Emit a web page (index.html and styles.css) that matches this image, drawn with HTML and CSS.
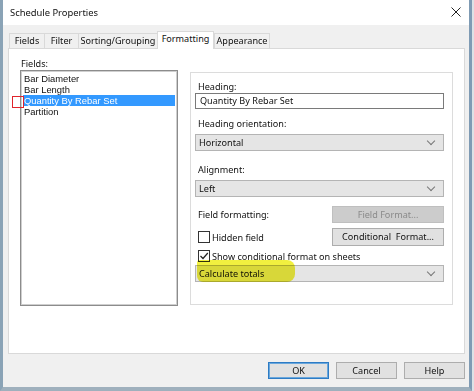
FILE: index.html
```html
<!DOCTYPE html>
<html>
<head>
<title>Schedule Properties</title>
<link rel="stylesheet" href="styles.css">
</head>
<body>
<div class="window">
	<div class="titlebar">
		<span class="title">Schedule Properties</span>
		<svg class="close" width="10" height="10" viewBox="0 0 10 10"><path d="M0.5 0.5 L9.5 9.5 M9.5 0.5 L0.5 9.5" stroke="#222" stroke-width="1"/></svg>
	</div>
	<div class="frame">
		<div class="tabs">
			<div class="tab tab-fields">Fields</div>
			<div class="tab tab-filter">Filter</div>
			<div class="tab tab-sorting">Sorting/Grouping</div>
			<div class="tab tab-formatting selected">Formatting</div>
			<div class="tab tab-appearance">Appearance</div>
		</div>
		<div class="page">
			<div class="fields-col">
				<div class="label">Fields:</div>
				<div class="listbox">
					<div class="item">Bar Diameter</div>
					<div class="item">Bar Length</div>
					<div class="item active">Quantity By Rebar Set</div>
					<div class="item">Partition</div>
				</div>
			</div>
			<div class="group">
				<div class="label">Heading:</div>
				<div class="textbox">Quantity By Rebar Set</div>
				<div class="label gap-big">Heading orientation:</div>
				<div class="combo">Horizontal <span class="chev"></span></div>
				<div class="label gap-align">Alignment:</div>
				<div class="combo">Left <span class="chev"></span></div>
				<div class="row row-format">
					<span class="label">Field formatting:</span>
					<div class="button disabled">Field Format...</div>
				</div>
				<div class="row row-hidden">
					<span class="check"><span class="box"></span>Hidden field</span>
					<div class="button cond">Conditional&nbsp; Format...</div>
				</div>
				<div class="row row-show">
					<span class="check"><span class="box"><svg width="10" height="10" viewBox="0 0 10 10"><path d="M1.5 5 L4 7.5 L8.8 2" fill="none" stroke="#222" stroke-width="1.2"/></svg></span>Show conditional format on sheets</span>
				</div>
				<div class="combo totals">Calculate totals <span class="chev"></span></div>
			</div>
			<div class="marker-red"></div>
			<div class="marker-yellow"></div>
		</div>
		<div class="buttons">
			<div class="button focused">OK</div>
			<div class="button">Cancel</div>
			<div class="button">Help</div>
		</div>
	</div>
</div>
</body>
</html>
```

FILE: styles.css
```css
html, body { margin: 0; padding: 0; background: #dde2e6; }
body { font-family: "Noto Sans", "DejaVu Sans", sans-serif; font-size: 9.1px; color: #111; }
.window { width: 472px; height: 391px; box-sizing: border-box; border-left: 3px solid #8aa3b6; border-right: 3px solid #7f9bb4; border-bottom: 4px solid #9fb0bd; display: flex; flex-direction: column; background: #f0f0f0; }
.titlebar { height: 25px; flex: none; background: #fff; display: flex; align-items: center; padding-left: 7px; padding-right: 8px; }
.title { font-size: 9.4px; flex: 1; padding-bottom: 1px; }
.close { margin-top: -2px; }
.frame { flex: 1; display: flex; flex-direction: column; padding: 0 4px 0 5px; }
.tabs { height: 23px; display: flex; align-items: flex-end; padding-left: 1px; }
.tab { height: 15px; line-height: 14px; box-sizing: border-box; border: 1px solid #d9d9d9; border-bottom: none; border-right: none; text-align: center; background: #f0f0f0; white-space: nowrap; }
.tab-fields { width: 35px; }
.tab-filter { width: 34px; }
.tab-sorting { width: 79px; }
.tab-appearance { width: 56px; border-right: 1px solid #d9d9d9; }
.tab.selected { width: 57px; height: 18px; line-height: 14px; background: #fff; border: 1px solid #d9d9d9; border-bottom: none; margin-bottom: -1px; position: relative; z-index: 1; }
.page { height: 306px; box-sizing: border-box; background: #fff; border: 1px solid #d9d9d9; display: flex; padding: 8px 0 0 11px; position: relative; }
.label { line-height: 13px; height: 13px; white-space: nowrap; }
.fields-col { width: 158px; display: flex; flex-direction: column; }
.fields-col .label { margin-left: 1px; }
.listbox { height: 236px; box-sizing: border-box; border: 1px solid #8c8c8c; box-shadow: inset 0 0 0 1px #cfcfcf; padding: 2px 2px 0 2px; }
.item { height: 11px; line-height: 11px; padding-left: 1px; white-space: nowrap; font-family: "Liberation Sans", Arial, sans-serif; font-size: 9.4px; }
.item.active { background: #3399ff; color: #fff; }
.group { width: 263px; height: 233px; margin: 15px 0 0 12px; box-sizing: border-box; border: 1px solid #dcdcdc; padding: 7px 0 0 4px; display: flex; flex-direction: column; }
.group > .label { margin-left: 3px; }
.textbox { width: 249px; height: 16px; box-sizing: border-box; border: 1px solid #7a7a7a; line-height: 14px; padding-left: 4px; }
.gap-big { margin-top: 8px; }
.gap-align { margin-top: 12px; }
.combo { width: 249px; height: 17px; box-sizing: border-box; border: 1px solid #b4b4b4; background: #e5e5e5; line-height: 15px; padding-left: 3px; display: flex; align-items: center; justify-content: space-between; margin-top: 4px; }
.chev { width: 5px; height: 5px; border-right: 1px solid #777; border-bottom: 1px solid #777; transform: rotate(45deg); margin: -4px 9px 0 0; }
.row { display: flex; align-items: center; justify-content: space-between; width: 249px; }
.row .label { margin-left: 3px; }
.row-format { margin-top: 9px; height: 17px; }
.row-hidden { margin-top: 5px; height: 18px; }
.row-show { margin-top: 4px; height: 12px; }
.totals { margin-top: 3px; }
.check { display: flex; align-items: center; margin-left: 3px; white-space: nowrap; }
.box { width: 12px; height: 12px; box-sizing: border-box; border: 1px solid #333; background: #fff; margin-right: 2px; display: flex; align-items: center; justify-content: center; }
.button { box-sizing: border-box; border: 1px solid #adadad; background: #e1e1e1; text-align: center; }
.row .button { width: 112px; height: 100%; line-height: 15px; }
.button.disabled { background: #cccccc; border-color: #bfbfbf; color: #8a8a8a; }
.button.cond { line-height: 16px; }
.buttons { display: flex; justify-content: flex-end; gap: 7px; margin-top: 8px; }
.buttons .button { width: 61px; height: 17px; line-height: 15px; }
.buttons .button.focused { border: 1px solid #2d7bc4; box-shadow: inset 0 0 0 1px #6aa7dc; }
.marker-red { position: absolute; left: 3px; top: 47px; width: 10px; height: 10px; border: 1.5px solid #e0242c; border-right-width: 1px; }
.marker-yellow { position: absolute; left: 188px; top: 211px; width: 98px; height: 22px; background: #f0ef2a; mix-blend-mode: multiply; border-radius: 3px 8px 8px 6px; opacity: 0.9; }
```
